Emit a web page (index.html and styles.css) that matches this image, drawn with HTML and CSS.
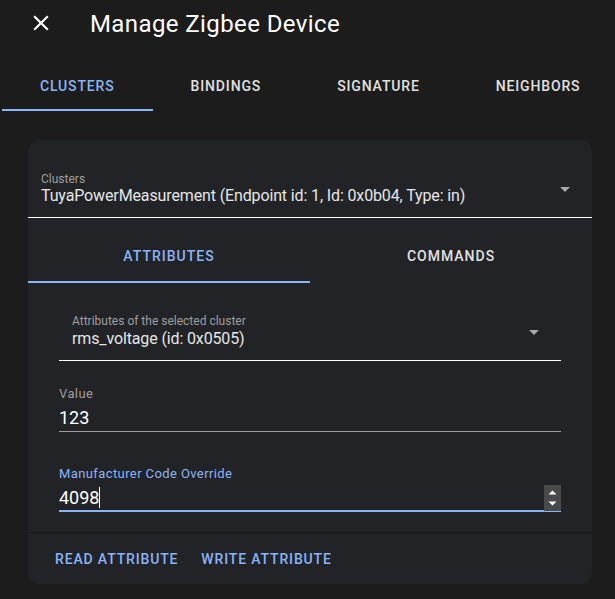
FILE: index.html
```html
<!DOCTYPE html>
<html>
<head>
  <title>Manage Zigbee Device</title>
  <link rel="stylesheet" href="styles.css">
</head>
<body>
  <div class="dialog">
    <div class="header">
      <svg class="close-icon" viewBox="0 0 24 24" width="24" height="24">
        <path fill="#ffffff" d="M19,6.41L17.59,5L12,10.59L6.41,5L5,6.41L10.59,12L5,17.59L6.41,19L12,13.41L17.59,19L19,17.59L13.41,12L19,6.41Z"/>
      </svg>
      <h1 class="title">Manage Zigbee Device</h1>
    </div>

    <div class="tabs">
      <div class="tab active">Clusters</div>
      <div class="tab">Bindings</div>
      <div class="tab">Signature</div>
      <div class="tab">Neighbors</div>
    </div>

    <div class="card">
      <div class="select cluster-select">
        <div class="select-text">
          <div class="select-label">Clusters</div>
          <div class="select-value">TuyaPowerMeasurement (Endpoint id: 1, Id: 0x0b04, Type: in)</div>
        </div>
        <span class="arrow"></span>
      </div>

      <div class="inner-tabs">
        <div class="inner-tab active">Attributes</div>
        <div class="inner-tab">Commands</div>
      </div>

      <div class="content">
        <div class="select attr-select">
          <div class="select-text">
            <div class="select-label">Attributes of the selected cluster</div>
            <div class="select-value">rms_voltage (id: 0x0505)</div>
          </div>
          <span class="arrow"></span>
        </div>

        <div class="field">
          <div class="field-label">Value</div>
          <div class="field-input">123</div>
        </div>

        <div class="field focused">
          <div class="field-label">Manufacturer Code Override</div>
          <div class="field-input">
            <span class="typed">4098<span class="caret"></span></span>
            <span class="spinner">
              <svg viewBox="0 0 17 26" width="17" height="26">
                <path fill="#ffffff" d="M4.5 9.5 L8.5 5.5 L12.5 9.5 Z"/>
                <path fill="#ffffff" d="M4.5 16.5 L12.5 16.5 L8.5 20.5 Z"/>
              </svg>
            </span>
          </div>
        </div>
      </div>

      <div class="card-actions">
        <button class="text-btn">Read Attribute</button>
        <button class="text-btn">Write Attribute</button>
      </div>
    </div>
  </div>
</body>
</html>
```

FILE: styles.css
```css
body {
  margin: 0;
  background-color: #1c1c1c;
  font-family: Roboto, "Noto Sans", sans-serif;
  color: #e1e1e1;
}

.dialog {
  width: 615px;
  height: 599px;
  overflow: hidden;
}

.header {
  display: flex;
  align-items: center;
  height: 46px;
  padding-left: 28px;
}

.close-icon {
  width: 26px;
  height: 26px;
}

.title {
  margin: 1px 0 0 36px;
  font-size: 24px;
  font-weight: 400;
  color: #ffffff;
  letter-spacing: 0.4px;
}

.tabs {
  display: flex;
  margin-top: 17px;
  padding-left: 2px;
}

.tab {
  height: 46px;
  line-height: 46px;
  padding: 0 38px;
  font-size: 14px;
  font-weight: 500;
  letter-spacing: 0.85px;
  text-transform: uppercase;
  color: #e1e1e1;
  border-bottom: 2px solid transparent;
  white-space: nowrap;
}

.tab.active {
  color: #8ab4f8;
  border-bottom-color: #8ab4f8;
}

.card {
  margin: 29px 23px 0 28px;
  background-color: #222327;
  border-radius: 12px;
}

.select {
  display: flex;
  align-items: center;
  justify-content: space-between;
}

.cluster-select {
  padding: 32px 22px 11px 13px;
  border-bottom: 1px solid #ffffff;
}

.select-label {
  font-size: 12px;
  line-height: 14px;
  color: #9e9e9e;
}

.select-value {
  font-size: 16px;
  line-height: 20px;
  letter-spacing: -0.13px;
  color: #e6e6e6;
}

.arrow {
  width: 0;
  height: 0;
  border-left: 5px solid transparent;
  border-right: 5px solid transparent;
  border-top: 5px solid #a8a8a8;
}

.inner-tabs {
  display: flex;
}

.inner-tab {
  flex: 1;
  text-align: center;
  padding-top: 28px;
  padding-bottom: 15px;
  line-height: 20px;
  font-size: 14px;
  font-weight: 500;
  letter-spacing: 1px;
  text-transform: uppercase;
  color: #e1e1e1;
  border-bottom: 2px solid transparent;
}

.inner-tab.active {
  color: #8ab4f8;
  border-bottom-color: #8ab4f8;
}

.content {
  padding: 0 31px 20px 31px;
  border-bottom: 1px solid #18191b;
}

.attr-select {
  padding: 31px 22px 10px 13px;
  border-bottom: 1px solid #ffffff;
}

.attr-select .select-value {
  line-height: 22px;
}

.field {
  margin-top: 25px;
  border-bottom: 1px solid #9e9e9e;
  padding-bottom: 1px;
}

.field-label {
  font-size: 13px;
  line-height: 16px;
  color: #9e9e9e;
  letter-spacing: 0.4px;
}

.field-input {
  margin-top: 4px;
  font-size: 18px;
  line-height: 24px;
  color: #ffffff;
  display: flex;
  align-items: center;
  justify-content: space-between;
}

.field.focused {
  margin-top: 34px;
  border-bottom: 2px solid #8ab4f8;
  padding-bottom: 0;
}

.field.focused .field-label {
  color: #8ab4f8;
}

.caret {
  display: inline-block;
  width: 1px;
  height: 21px;
  background-color: #ffffff;
  vertical-align: -4px;
}

.spinner {
  display: block;
  width: 17px;
  height: 26px;
  background-color: #4a4a4a;
  margin: -1px 0 -1px 0;
}

.spinner svg {
  display: block;
}

.card-actions {
  display: flex;
  padding: 16px 19px 15px 19px;
}

.text-btn {
  background: none;
  border: none;
  padding: 0 8px;
  margin-right: 7px;
  font-family: Roboto, "Noto Sans", sans-serif;
  font-size: 14px;
  font-weight: 500;
  line-height: 20px;
  letter-spacing: 0.85px;
  text-transform: uppercase;
  color: #8ab4f8;
  cursor: pointer;
}
```
